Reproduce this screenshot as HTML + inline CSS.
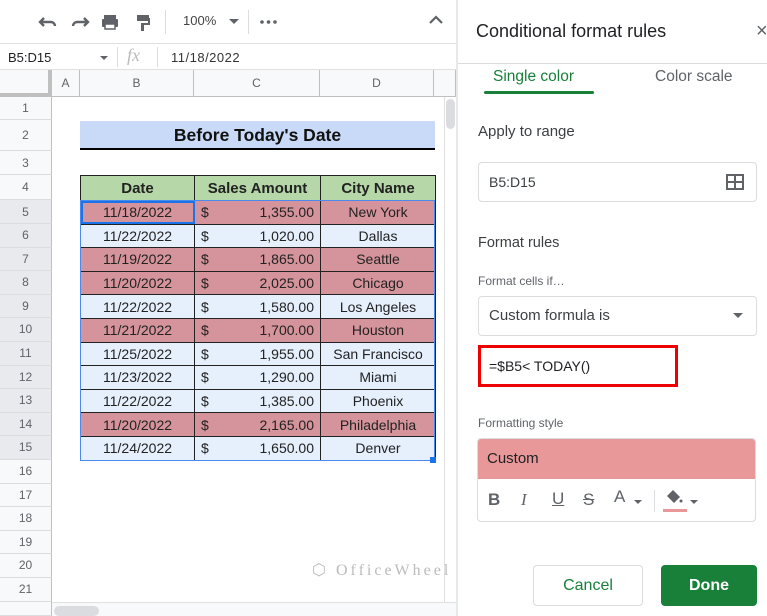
<!DOCTYPE html>
<html><head><style>
*{margin:0;padding:0;box-sizing:border-box}
body{width:767px;height:616px;overflow:hidden;background:#fff;font-family:"Liberation Sans",Arial,sans-serif;position:relative;color:#202124}
.a{position:absolute}
.rh{position:absolute;left:0;width:52px;background:#f8f9fa;border-bottom:1px solid #dadce0;border-right:1px solid #c0c0c0;color:#5f6368;font-size:12px;text-align:center}
.ch{position:absolute;top:70px;height:27px;background:#f8f9fa;border-right:1px solid #c0c0c0;border-bottom:1px solid #c0c0c0;color:#5f6368;font-size:12px;text-align:center;line-height:27px}
table{border-collapse:collapse;position:absolute;left:80px;top:175px;font-size:14px}
td{border:1px solid #222;height:23.6px;padding:0 6px;color:#222}
td.d{text-align:center}
.p td{background:#d5939b}
.b td{background:#e6effc}
.h td{background:#b6d7a8;font-weight:bold;font-size:15px;text-align:center;height:25px}
.m{display:flex;justify-content:space-between}
</style></head><body>
<div class="a" style="left:0;top:0;width:456px;height:44px;background:#fff;border-bottom:1px solid #e0e0e0"></div>
<svg class="a" style="left:38px;top:12px" width="120" height="20" viewBox="0 0 120 20" fill="#5f6368">
<path d="M6 6 L2 10 L6 14 M2 10 H13 A4 4 0 0 1 17 14" stroke="#5f6368" stroke-width="2.4" fill="none"/>
<path d="M46 6 L50 10 L46 14 M50 10 H39 A4 4 0 0 0 35 14" stroke="#5f6368" stroke-width="2.4" fill="none"/>
<rect x="66" y="3" width="12" height="4"/><rect x="64" y="7" width="16" height="8" rx="1"/><rect x="67" y="12" width="10" height="5" fill="#fff" stroke="#5f6368" stroke-width="1.5"/>
<rect x="99" y="3" width="12" height="6"/><rect x="110" y="6" width="2" height="6"/><rect x="103" y="11" width="9" height="2"/><rect x="103" y="11" width="3" height="8"/>
</svg>
<div class="a" style="left:165px;top:10px;width:1px;height:24px;background:#dadce0"></div>
<div class="a" style="left:183px;top:13px;font-size:13px;color:#444">100%</div>
<div class="a" style="left:229px;top:19px;border:5px solid transparent;border-top-color:#5f6368"></div>
<div class="a" style="left:248px;top:10px;width:1px;height:24px;background:#dadce0"></div>
<svg class="a" style="left:259px;top:19px" width="20" height="6"><circle cx="3" cy="3" r="1.8" fill="#5f6368"/><circle cx="9.5" cy="3" r="1.8" fill="#5f6368"/><circle cx="16" cy="3" r="1.8" fill="#5f6368"/></svg>
<svg class="a" style="left:428px;top:15px" width="16" height="10"><path d="M2 8 L8 2 L14 8" stroke="#5f6368" stroke-width="2.2" fill="none"/></svg>
<div class="a" style="left:0;top:44px;width:456px;height:26px;border-bottom:1px solid #e0e0e0"></div>
<div class="a" style="left:8px;top:50px;font-size:13px">B5:D15</div>
<div class="a" style="left:100px;top:56px;border:4px solid transparent;border-top-color:#5f6368"></div>
<div class="a" style="left:117px;top:47px;width:1px;height:20px;background:#dadce0"></div>
<div class="a" style="left:127px;top:45px;font-size:18px;color:#bbb;font-style:italic;font-family:'Liberation Serif',serif">fx</div>
<div class="a" style="left:157px;top:47px;width:1px;height:20px;background:#dadce0"></div>
<div class="a" style="left:171px;top:50px;font-size:13px;color:#333;letter-spacing:.5px">11/18/2022</div>
<div class="ch" style="left:0;width:52px;border-right:4px solid #c0c0c0;border-bottom:4px solid #c0c0c0"></div>
<div class="ch" style="left:52px;width:28px">A</div>
<div class="ch" style="left:80px;width:114px">B</div>
<div class="ch" style="left:194px;width:126px">C</div>
<div class="ch" style="left:320px;width:114px">D</div>
<div class="ch" style="left:434px;width:22px"></div>
<div class="rh" style="top:97px;height:23px;line-height:23px">1</div>
<div class="rh" style="top:120px;height:31px;line-height:31px">2</div>
<div class="rh" style="top:151px;height:24px;line-height:24px">3</div>
<div class="rh" style="top:175px;height:25px;line-height:25px">4</div>
<div class="rh" style="top:200px;height:24px;line-height:24px;background:#e8eaed">5</div>
<div class="rh" style="top:224px;height:24px;line-height:23px;background:#e8eaed">6</div>
<div class="rh" style="top:248px;height:23px;line-height:23px;background:#e8eaed">7</div>
<div class="rh" style="top:271px;height:24px;line-height:23px;background:#e8eaed">8</div>
<div class="rh" style="top:295px;height:23px;line-height:23px;background:#e8eaed">9</div>
<div class="rh" style="top:318px;height:24px;line-height:23px;background:#e8eaed">10</div>
<div class="rh" style="top:342px;height:24px;line-height:23px;background:#e8eaed">11</div>
<div class="rh" style="top:366px;height:23px;line-height:23px;background:#e8eaed">12</div>
<div class="rh" style="top:389px;height:24px;line-height:23px;background:#e8eaed">13</div>
<div class="rh" style="top:413px;height:23px;line-height:23px;background:#e8eaed">14</div>
<div class="rh" style="top:436px;height:24px;line-height:23px;background:#e8eaed">15</div>
<div class="rh" style="top:460px;height:24px;line-height:23px">16</div>
<div class="rh" style="top:484px;height:23px;line-height:23px">17</div>
<div class="rh" style="top:507px;height:24px;line-height:23px">18</div>
<div class="rh" style="top:531px;height:23px;line-height:23px">19</div>
<div class="rh" style="top:554px;height:24px;line-height:23px">20</div>
<div class="rh" style="top:578px;height:24px;line-height:23px">21</div>
<div class="rh" style="top:602px;height:14px"></div>
<div class="a" style="left:80px;top:121px;width:355px;height:29px;background:#c9daf8;border-bottom:2px solid #000;text-align:center;font-weight:bold;font-size:17.5px;line-height:29px;color:#111">Before Today's Date</div>
<table>
<colgroup><col style="width:114px"><col style="width:126px"><col style="width:115px"></colgroup>
<tr class="h"><td>Date</td><td>Sales Amount</td><td>City Name</td></tr>
<tr class="p"><td class="d" style="outline:2px solid #1a73e8;outline-offset:-2px">11/18/2022</td><td><div class="m"><span>$</span><span>1,355.00</span></div></td><td class="d">New York</td></tr>
<tr class="b"><td class="d">11/22/2022</td><td><div class="m"><span>$</span><span>1,020.00</span></div></td><td class="d">Dallas</td></tr>
<tr class="p"><td class="d">11/19/2022</td><td><div class="m"><span>$</span><span>1,865.00</span></div></td><td class="d">Seattle</td></tr>
<tr class="p"><td class="d">11/20/2022</td><td><div class="m"><span>$</span><span>2,025.00</span></div></td><td class="d">Chicago</td></tr>
<tr class="b"><td class="d">11/22/2022</td><td><div class="m"><span>$</span><span>1,580.00</span></div></td><td class="d">Los Angeles</td></tr>
<tr class="p"><td class="d">11/21/2022</td><td><div class="m"><span>$</span><span>1,700.00</span></div></td><td class="d">Houston</td></tr>
<tr class="b"><td class="d">11/25/2022</td><td><div class="m"><span>$</span><span>1,955.00</span></div></td><td class="d">San Francisco</td></tr>
<tr class="b"><td class="d">11/23/2022</td><td><div class="m"><span>$</span><span>1,290.00</span></div></td><td class="d">Miami</td></tr>
<tr class="b"><td class="d">11/22/2022</td><td><div class="m"><span>$</span><span>1,385.00</span></div></td><td class="d">Phoenix</td></tr>
<tr class="p"><td class="d">11/20/2022</td><td><div class="m"><span>$</span><span>2,165.00</span></div></td><td class="d">Philadelphia</td></tr>
<tr class="b"><td class="d">11/24/2022</td><td><div class="m"><span>$</span><span>1,650.00</span></div></td><td class="d">Denver</td></tr>
</table>
<div class="a" style="left:80px;top:200px;width:355px;height:261px;border:1px solid #4a8af0"></div>
<div class="a" style="left:430px;top:457px;width:6px;height:6px;background:#1a73e8"></div>
<div class="a" style="left:444px;top:97px;width:12px;height:505px;border-left:1px solid #e0e0e0;background:#fff"></div>
<div class="a" style="left:446px;top:99px;width:9px;height:30px;border-radius:5px;background:#dadce0"></div>
<div class="a" style="left:52px;top:602px;width:404px;height:14px;border-top:1px solid #e0e0e0;background:#f8f9fa"></div>
<div class="a" style="left:54px;top:606px;width:45px;height:10px;border-radius:5px;background:#dadce0"></div>
<div class="a" style="left:312px;top:560px;font-family:'Liberation Serif',serif;font-size:16px;color:#bbb;letter-spacing:3px">⬡ OfficeWheel</div>
<div class="a" style="left:456px;top:0;width:311px;height:616px;background:#fff;border-left:2px solid #e8e8e8"></div>
<div class="a" style="left:476px;top:21px;font-size:18px;color:#202124">Conditional format rules</div>
<div class="a" style="left:756px;top:20px;font-size:20px;color:#5f6368">×</div>
<div class="a" style="left:458px;top:63px;width:309px;height:1px;background:#dadce0"></div>
<div class="a" style="left:493px;top:68px;font-size:15.5px;color:#188038">Single color</div>
<div class="a" style="left:484px;top:91px;width:110px;height:3px;background:#188038;border-radius:2px"></div>
<div class="a" style="left:655px;top:68px;font-size:15.5px;color:#5f6368">Color scale</div>
<div class="a" style="left:478px;top:123px;font-size:15px;color:#3c4043">Apply to range</div>
<div class="a" style="left:478px;top:162px;width:279px;height:40px;border:1px solid #dadce0;border-radius:4px;font-size:14px;line-height:38px;padding-left:10px;color:#3c4043">B5:D15</div>
<svg class="a" style="left:726px;top:174px" width="18" height="16"><rect x="1" y="1" width="16" height="14" fill="none" stroke="#5f6368" stroke-width="2"/><path d="M9 1V15M1 8H17" stroke="#5f6368" stroke-width="2"/></svg>
<div class="a" style="left:478px;top:235px;font-size:14.5px;color:#3c4043">Format rules</div>
<div class="a" style="left:478px;top:274px;font-size:12px;color:#5f6368">Format cells if…</div>
<div class="a" style="left:478px;top:296px;width:279px;height:40px;border:1px solid #dadce0;border-radius:4px;font-size:15px;line-height:38px;padding-left:10px;color:#3c4043">Custom formula is</div>
<div class="a" style="left:733px;top:313px;border:5px solid transparent;border-top-color:#5f6368"></div>
<div class="a" style="left:478px;top:345px;width:200px;height:42px;border:3px solid #e00;font-size:14px;line-height:36px;padding-left:8px;color:#202124">=$B5&lt; TODAY()</div>
<div class="a" style="left:478px;top:416px;font-size:12px;color:#5f6368">Formatting style</div>
<div class="a" style="left:477px;top:438px;width:279px;height:84px;border:1px solid #dadce0;border-radius:4px;overflow:hidden">
<div style="height:40px;background:#e89898;font-size:15px;line-height:40px;padding-left:9px;color:#202124">Custom</div></div>
<div class="a" style="left:488px;top:490px;font-size:17px;font-weight:bold;color:#5f6368">B</div>
<div class="a" style="left:521px;top:490px;font-size:17px;font-style:italic;color:#5f6368;font-family:'Liberation Serif',serif">I</div>
<div class="a" style="left:552px;top:489px;font-size:17px;color:#5f6368;text-decoration:underline">U</div>
<div class="a" style="left:583px;top:490px;font-size:17px;color:#5f6368;text-decoration:line-through">S</div>
<div class="a" style="left:614px;top:487px;font-size:17px;color:#5f6368">A</div>
<div class="a" style="left:634px;top:500px;border:4px solid transparent;border-top-color:#5f6368"></div>
<div class="a" style="left:654px;top:490px;width:1px;height:22px;background:#dadce0"></div>
<svg class="a" style="left:663px;top:487px" width="36" height="26"><path d="M4 9 L10 3 L17 10 L11 16 Z" fill="#5f6368"/><circle cx="18" cy="14" r="1.5" fill="#5f6368"/><rect x="0" y="22" width="24" height="3" fill="#e89898"/><path d="M27 13h8l-4 4z" fill="#5f6368"/></svg>
<div class="a" style="left:533px;top:565px;width:110px;height:41px;border:1px solid #dadce0;border-radius:4px;text-align:center;line-height:39px;font-size:16px;color:#188038">Cancel</div>
<div class="a" style="left:661px;top:565px;width:96px;height:41px;background:#188038;border-radius:4px;text-align:center;line-height:41px;font-size:16px;font-weight:bold;color:#fff">Done</div>
</body></html>
